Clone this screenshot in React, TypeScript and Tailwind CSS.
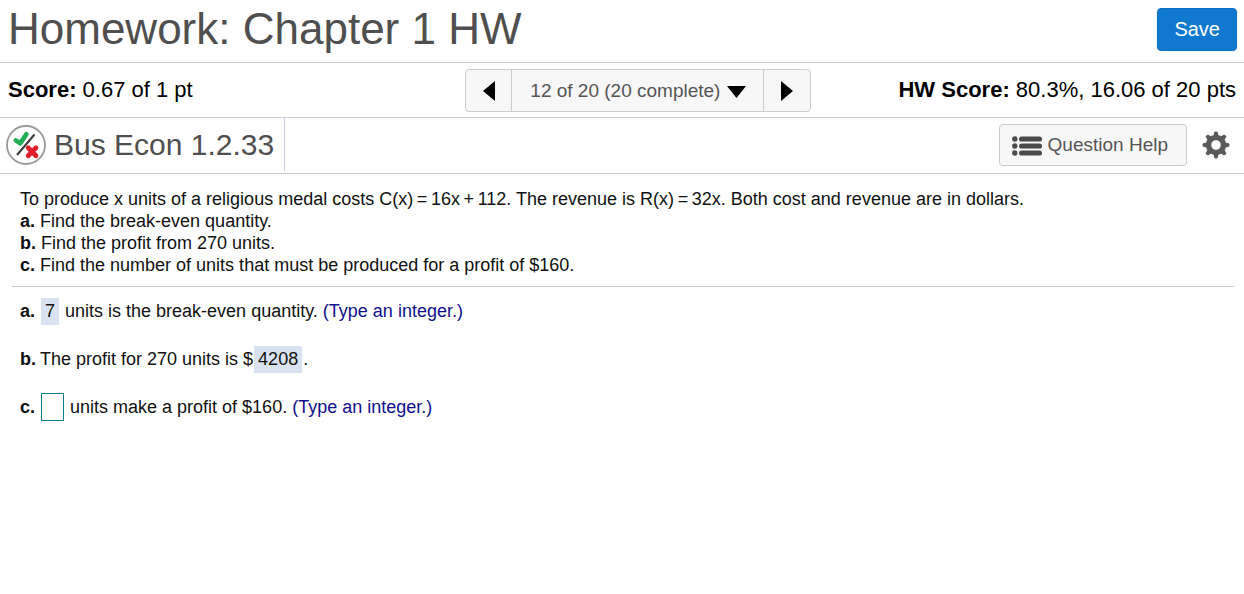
import React, { useState } from "react";

const QUESTION_COUNT = 20;

const ResultIcon = () => (
  <svg className="w-10 h-10 flex-shrink-0" viewBox="0 0 40 40" fill="none" aria-hidden="true">
    <circle cx="20" cy="20" r="19" fill="#fff" stroke="#999" strokeWidth="1.8" />
    <path d="M11 30 L28.5 9.5" stroke="#3a3a3a" strokeWidth="2" />
    <path d="M9.8 15.4 L14.2 18.4 L20.4 9.2" stroke="#1fae54" strokeWidth="4.6" strokeLinecap="round" strokeLinejoin="round" />
    <path d="M22.2 22.8 L30 30.8 M30 22.8 L22.2 30.8" stroke="#e3202a" strokeWidth="4.8" strokeLinecap="round" />
  </svg>
);

const ListIcon = () => (
  <svg className="w-[30px] h-5" viewBox="0 0 30 20" fill="#4a4a4a" aria-hidden="true">
    {[3, 10, 17].map((y) => (
      <g key={y}>
        <circle cx="2.8" cy={y} r="2.7" />
        <rect x="7" y={y - 2.6} width="23" height="5.2" rx="2.6" />
      </g>
    ))}
  </svg>
);

const GearIcon = () => (
  <svg className="w-7 h-7" viewBox="0 0 28 28" fill="#5a5a5a" aria-hidden="true">
    {[0, 45, 90, 135, 180, 225, 270, 315].map((deg) => (
      <path key={deg} d="M11.2 6 L12.2 1.4 Q12.4 0.6 13.2 0.6 H14.8 Q15.6 0.6 15.8 1.4 L16.8 6 Z" transform={`rotate(${deg} 14 14)`} />
    ))}
    <circle cx="14" cy="14" r="7.5" fill="none" stroke="#5a5a5a" strokeWidth="5.4" />
  </svg>
);

const App = () => {
  const [question, setQuestion] = useState(12);
  const [units, setUnits] = useState("");

  return (
    <div className="min-h-screen bg-white font-['Liberation_Sans',Arial,sans-serif] text-black">
      <header className="flex h-[63px] items-center justify-between border-b border-[#c8cfe0] pb-1 pl-2 pr-[7px]">
        <h1 className="text-[44px] leading-[54px] text-[#4f4f4f]">Homework: Chapter 1 HW</h1>
        <button className="h-[43px] rounded border border-[#0d6ebd] bg-[#0f79cf] px-4 text-xl text-white">
          Save
        </button>
      </header>

      <div className="flex h-[55px] items-center border-b border-[#c8cfe0] px-2 text-[22px]">
        <p className="flex-[14] pb-0.5"><b>Score:</b> 0.67 of 1 pt</p>
        <nav aria-label="Questions" className="flex h-[43px] rounded border border-[#cccccc] bg-[#f7f7f7]">
          <button
            aria-label="Previous question"
            className="flex w-[46px] items-center justify-center border-r border-[#cccccc] pt-0.5"
            onClick={() => setQuestion(Math.max(1, question - 1))}
          >
            <svg className="h-5 w-3" viewBox="0 0 12 20" aria-hidden="true"><path d="M12 0v20L0 10z" /></svg>
          </button>
          <div className="relative flex">
            <select
              aria-label="Choose question"
              className="w-[251px] appearance-none pl-[18px] pt-0.5 text-[19px] text-[#555555]"
              value={question}
              onChange={(e) => setQuestion(Number(e.target.value))}
            >
              {Array.from({ length: QUESTION_COUNT }, (_, i) => (
                <option key={i} value={i + 1}>{`${i + 1} of 20 (20 complete)`}</option>
              ))}
            </select>
            <svg className="pointer-events-none absolute right-4 top-4 h-3 w-5" viewBox="0 0 20 12" aria-hidden="true">
              <path d="M0 0h19L9.5 12z" />
            </svg>
          </div>
          <button
            aria-label="Next question"
            className="flex w-[47px] items-center justify-center border-l border-[#cccccc] pt-0.5"
            onClick={() => setQuestion(Math.min(QUESTION_COUNT, question + 1))}
          >
            <svg className="h-5 w-3" viewBox="0 0 12 20" aria-hidden="true"><path d="M0 0v20l12-10z" /></svg>
          </button>
        </nav>
        <p className="flex-[13] pb-0.5 text-right"><b>HW Score:</b> 80.3%, 16.06 of 20 pts</p>
      </div>

      <div className="flex h-14 items-center justify-between border-b border-[#c8cfe0] pb-0.5 pl-1.5 pr-3.5">
        <div className="flex h-[53px] items-center gap-2 border-r border-[#c8cfe0] pr-2.5">
          <ResultIcon />
          <h2 className="text-[30px] text-[#4f4f4f]">Bus Econ 1.2.33</h2>
        </div>
        <div className="flex items-center gap-[15px]">
          <button className="flex h-[42px] items-center gap-1.5 rounded border border-[#cccccc] bg-[#f7f7f7] pl-3 pr-[18px] pt-0.5 text-[19px] text-[#555555]">
            <ListIcon />
            Question Help
          </button>
          <button aria-label="Settings"><GearIcon /></button>
        </div>
      </div>

      <main className="px-3 pr-2.5 pt-3.5 text-lg text-[#111111]">
        <section className="border-b border-[#c8cfe0] px-2 pb-2.5 leading-[22px]">
          <p>
            To produce x units of a religious medal costs C(x)&thinsp;=&thinsp;16x&thinsp;+&thinsp;112. The revenue is
            R(x)&thinsp;=&thinsp;32x. Both cost and revenue are in dollars.
          </p>
          <p><b>a.</b> Find the break-even quantity.</p>
          <p><b>b.</b> Find the profit from 270 units.</p>
          <p><b>c.</b> Find the number of units that must be produced for a profit of $160.</p>
        </section>

        <section className="flex flex-col gap-5 px-2 pt-2.5">
          <div className="flex h-7 items-center">
            <b className="mr-1.5">a.</b>
            <span className="bg-[#d9e2f1] px-1 leading-[27px]">7</span>
            <span className="ml-1.5">units is the break-even quantity. <span className="text-[#10108c]">(Type an integer.)</span></span>
          </div>
          <div className="flex h-7 items-center">
            <b className="mr-1">b.</b>
            <span>The profit for 270 units is $</span>
            <span className="mx-px bg-[#d9e2f1] px-1 leading-[27px]">4208</span>
            <span>.</span>
          </div>
          <div className="flex h-7 items-center">
            <label htmlFor="units" className="mr-1.5 font-bold">c.</label>
            <input
              id="units"
              className="h-7 w-[23px] border border-[#0f7c93] px-1"
              value={units}
              onChange={(e) => setUnits(e.target.value)}
            />
            <span className="ml-1.5">units make a profit of $160. <span className="text-[#10108c]">(Type an integer.)</span></span>
          </div>
        </section>
      </main>
    </div>
  );
};

export default App;
